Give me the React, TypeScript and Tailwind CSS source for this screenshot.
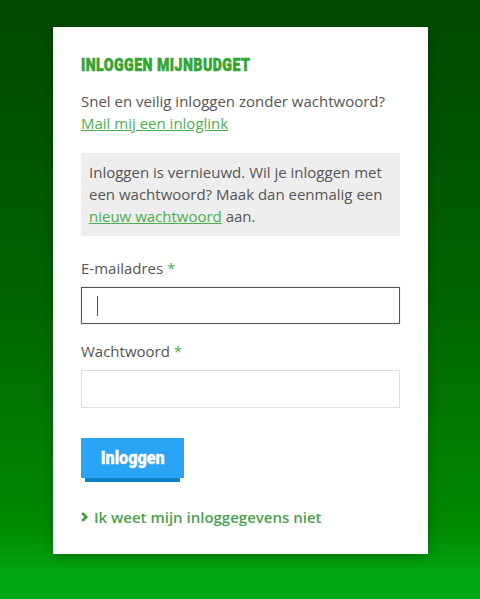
export default function App() {
  return (
    <div className="h-[599px] w-[480px] overflow-hidden pt-[27px] pl-[53px] bg-[linear-gradient(to_bottom,#004800_0%,#006400_50%,#008a00_88%,#00a614_96%,#00a816_100%)] font-['Open_Sans',sans-serif] text-[15px] leading-[22px] text-[#555555]">
      <div className="flex h-[527px] w-[375px] flex-col bg-white px-[28px] pt-[28px] shadow-[0_3px_10px_rgba(0,0,0,0.25)]">
        <h1 className="h-[20px] origin-left scale-x-[0.745] whitespace-nowrap font-['Roboto',sans-serif] text-[19px] leading-[20px] font-black tracking-[0.6px] text-[#33a532] uppercase [-webkit-text-stroke:0.6px_#33a532]">
          Inloggen MijnBudget
        </h1>
        <p className="mt-[15px]">
          Snel en veilig inloggen zonder wachtwoord?
          <br />
          <a href="#" className="text-[#4caf50] underline">Mail mij een inloglink</a>
        </p>
        <div className="mt-[19px] h-[83px] bg-[#eeeeee] px-[8px] py-[8px]">
          Inloggen is vernieuwd. Wil je inloggen met een wachtwoord? Maak dan eenmalig een{' '}
          <a href="#" className="text-[#4caf50] underline">nieuw wachtwoord</a> aan.
        </div>
        <label className="mt-[21px] block">
          E-mailadres <span className="text-[#4caf50]">*</span>
        </label>
        <div className="mt-[8px] flex h-[37px] items-center border border-[#555555] pl-[15px] shadow-[0_0_1px_rgba(0,0,0,0.3)]">
          <span className="h-[20px] w-px bg-[#555555]" />
        </div>
        <label className="mt-[16px] block">
          Wachtwoord <span className="text-[#4caf50]">*</span>
        </label>
        <input className="mt-[8px] h-[38px] border border-[#dddddd] bg-white outline-none" />
        <div className="mt-[30px] w-[103px]">
          <button className="flex h-[40px] w-[103px] items-center justify-center bg-[#2aa4f4] font-['Roboto',sans-serif] text-[19px] font-black text-white">
            <span className="scale-x-[0.85] [-webkit-text-stroke:0.3px_#ffffff]">Inloggen</span>
          </button>
          <div className="mx-[4px] h-[4px] bg-[#0d82c8]" />
        </div>
        <a href="#" className="mt-[24px] flex items-center font-semibold text-[#4b9f4e]">
          <svg width="8" height="10" viewBox="0 0 8 10" className="mr-[5px]" fill="none">
            <path d="M1.2 1l4 4-4 4" stroke="#3fa142" strokeWidth="2.6" />
          </svg>
          Ik weet mijn inloggegevens niet
        </a>
      </div>
    </div>
  );
}
